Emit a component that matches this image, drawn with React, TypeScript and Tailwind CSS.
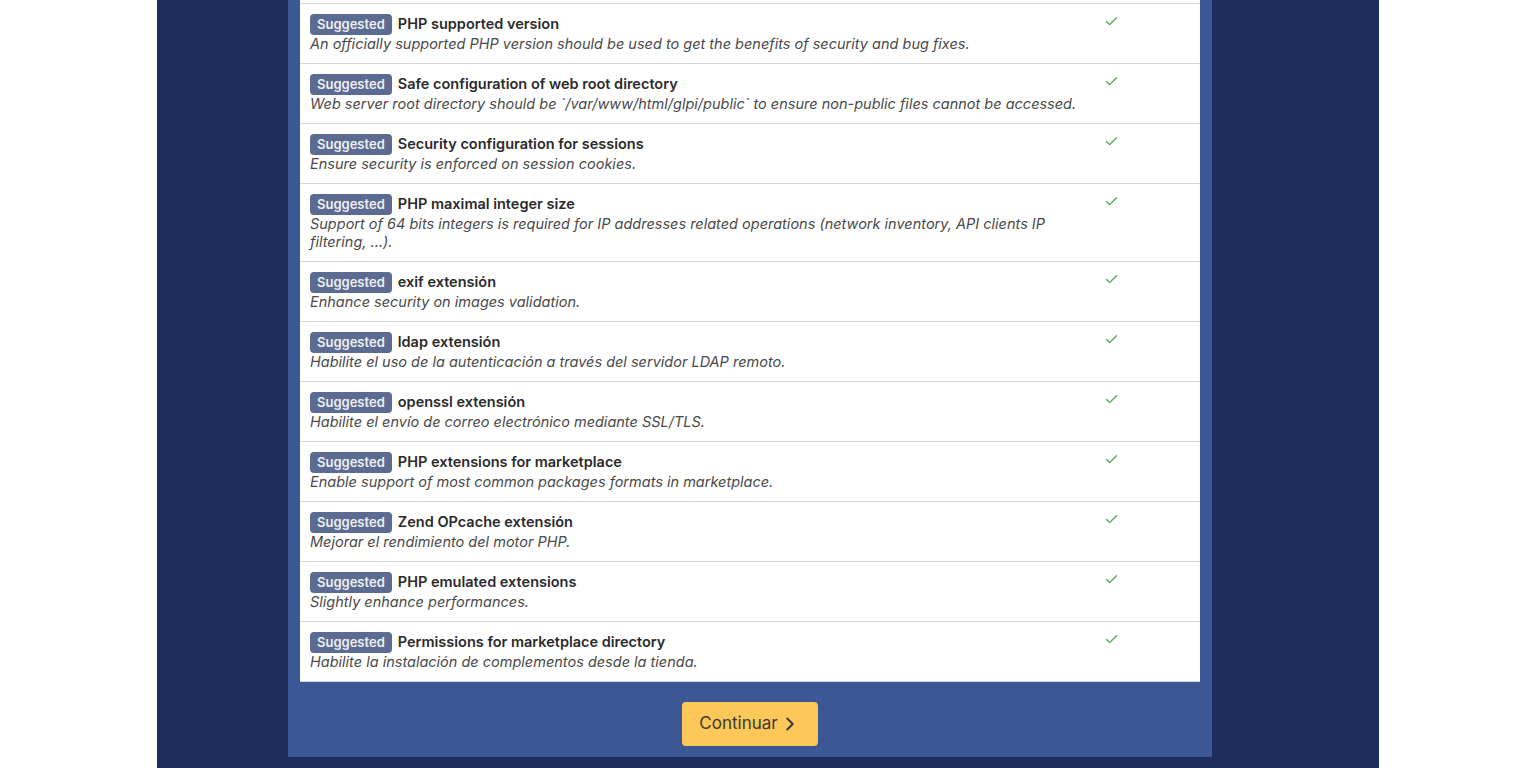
import React from 'react';
import { Check, ChevronRight } from 'lucide-react';

interface Requirement {
  title: string;
  description: string;
}

const REQUIREMENTS: Requirement[] = [
  {
    title: 'PHP supported version',
    description: 'An officially supported PHP version should be used to get the benefits of security and bug fixes.',
  },
  {
    title: 'Safe configuration of web root directory',
    description:
      'Web server root directory should be `/var/www/html/glpi/public` to ensure non-public files cannot be accessed.',
  },
  {
    title: 'Security configuration for sessions',
    description: 'Ensure security is enforced on session cookies.',
  },
  {
    title: 'PHP maximal integer size',
    description:
      'Support of 64 bits integers is required for IP addresses related operations (network inventory, API clients IP filtering, ...).',
  },
  { title: 'exif extensión', description: 'Enhance security on images validation.' },
  { title: 'ldap extensión', description: 'Habilite el uso de la autenticación a través del servidor LDAP remoto.' },
  { title: 'openssl extensión', description: 'Habilite el envío de correo electrónico mediante SSL/TLS.' },
  {
    title: 'PHP extensions for marketplace',
    description: 'Enable support of most common packages formats in marketplace.',
  },
  { title: 'Zend OPcache extensión', description: 'Mejorar el rendimiento del motor PHP.' },
  { title: 'PHP emulated extensions', description: 'Slightly enhance performances.' },
  {
    title: 'Permissions for marketplace directory',
    description: 'Habilite la instalación de complementos desde la tienda.',
  },
];

function RequirementRow({ item }: { item: Requirement }) {
  return (
    <div className="flex border-t border-[#d6d6d6]">
      <div className="w-[795px] pl-[10px] pr-[6px] pt-[9px] pb-[10px]">
        <div className="flex items-center h-[22px]">
          <span className="h-[21px] px-[7px] rounded-[4px] bg-[#5b6b91] text-[#eef0f5] text-[13px] font-semibold leading-[21px]">
            Suggested
          </span>
          <span className="ml-[6px] text-[14.5px] font-semibold text-[#2b2b2b]">{item.title}</span>
        </div>
        <p className="text-[14.5px] italic leading-[18px] text-[#4a4a4a]">{item.description}</p>
      </div>
      <div className="flex-1 pl-[9px] pt-[10px]">
        <Check className="w-[15px] h-[15px] text-[#52a852]" strokeWidth={2.2} />
      </div>
    </div>
  );
}

export default function App() {
  return (
    <div className="min-h-screen bg-white flex justify-center" style={{ fontFamily: 'Inter, "Noto Sans", sans-serif' }}>
      <div className="w-[1222px] min-h-[768px] bg-[#1d2d5e] pb-[11px]">
        <div className="ml-[131px] w-[924px] bg-[#3b5894] px-[12px] pb-[11px]">
          <div className="bg-white border-b border-[#d6d6d6]">
            <div className="h-[3px]" />
            {REQUIREMENTS.map(item => (
              <RequirementRow key={item.title} item={item} />
            ))}
          </div>
          <div className="flex justify-center pt-[20px]">
            <button className="flex items-center justify-center gap-[1px] w-[136px] h-[44px] rounded-[4px] bg-[#fdc859] text-[#3c3930] text-[17px]">
              Continuar
              <ChevronRight className="w-[22px] h-[22px]" strokeWidth={2.2} />
            </button>
          </div>
        </div>
      </div>
    </div>
  );
}
